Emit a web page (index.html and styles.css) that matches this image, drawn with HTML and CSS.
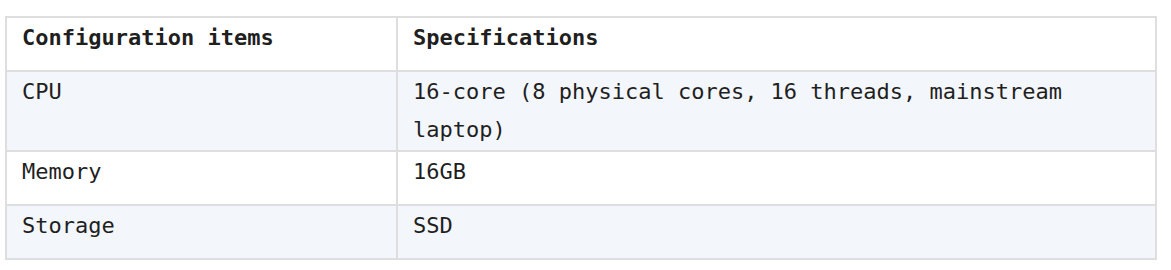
FILE: index.html
```html
<!DOCTYPE html>
<html lang="en">
<head>
<meta charset="utf-8">
<title>Configuration</title>
<link rel="stylesheet" href="styles.css">
</head>
<body>
<div class="page">
  <table class="spec-table">
    <colgroup>
      <col class="col-item">
      <col class="col-spec">
    </colgroup>
    <thead>
      <tr>
        <th>Configuration items</th>
        <th>Specifications</th>
      </tr>
    </thead>
    <tbody>
      <tr class="striped">
        <td>CPU</td>
        <td>16-core (8 physical cores, 16 threads, mainstream laptop)</td>
      </tr>
      <tr>
        <td>Memory</td>
        <td>16GB</td>
      </tr>
      <tr class="striped">
        <td>Storage</td>
        <td>SSD</td>
      </tr>
    </tbody>
  </table>
</div>
</body>
</html>
```

FILE: styles.css
```css
html, body {
  margin: 0;
  padding: 0;
  background: #ffffff;
}

.page {
  padding: 16px 14px 0 5px;
}

.spec-table {
  width: 100%;
  border-collapse: collapse;
  table-layout: fixed;
  font-family: "DejaVu Sans Mono", "Liberation Mono", monospace;
  font-size: 22px;
  line-height: 38px;
  color: #1f1f1f;
}

.col-item {
  width: 391px;
}

.spec-table th,
.spec-table td {
  border: 2px solid #dedede;
  padding: 1px 15px 1px 15px;
  height: 50px;
  vertical-align: top;
  text-align: left;
}

.spec-table th {
  font-weight: bold;
  background: #ffffff;
}

.spec-table tr.striped td {
  background: #f3f6fa;
}
```
